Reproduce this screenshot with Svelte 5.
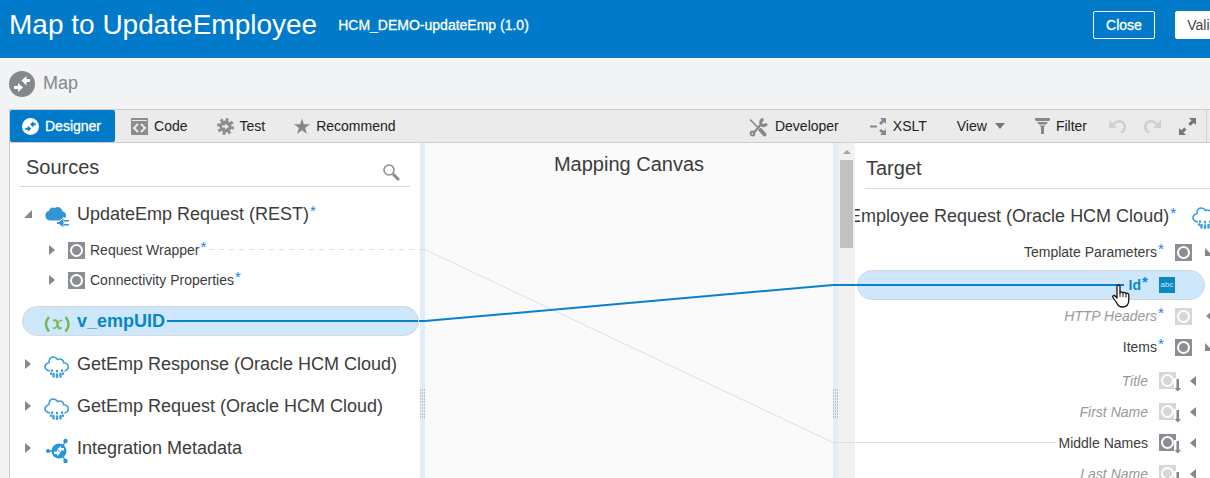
<script>
    const modes = [
        { name: 'Designer', icon: 'map', active: true },
        { name: 'Code', icon: 'code' },
        { name: 'Test', icon: 'gear' },
        { name: 'Recommend', icon: 'star' }
    ]

    const sources = [
        { name: 'UpdateEmp Request (REST)', icon: 'rest', required: true, open: true, children: [
            { name: 'Request Wrapper', required: true, mapped: true },
            { name: 'Connectivity Properties', required: true }
        ] },
        { name: 'v_empUID', icon: 'variable', selected: true },
        { name: 'GetEmp Response (Oracle HCM Cloud)', icon: 'hcm' },
        { name: 'GetEmp Request (Oracle HCM Cloud)', icon: 'hcm' },
        { name: 'Integration Metadata', icon: 'metadata' }
    ]

    const names = [
        { name: 'Title', unused: true },
        { name: 'First Name', unused: true },
        { name: 'Middle Names', mapped: true },
        { name: 'Last Name', unused: true }
    ]
</script>

{#snippet icon(name)}
    {#if name === 'map'}
        <svg class="mapicon" viewBox="0 0 26 26">
            <circle cx="13" cy="13" r="13" fill="currentColor" />
            <path class="cut" d="M12.500 9.500L17.500 5v3H21v3h-3.500v3.500zM14 16.500L9 12v3H5v3h4v3z" />
        </svg>
    {:else if name === 'code'}
        <svg width="17" height="17" viewBox="0 0 17 17">
            <path fill="#8b8d8f" d="M0 0h17v17H0z" />
            <path stroke="#ebebeb" d="M1 2.500h15" />
            <path fill="none" stroke="#ebebeb" stroke-width="2" d="M7 6L3 10l4 4M10 6l4 4-4 4" />
        </svg>
    {:else if name === 'gear'}
        <svg width="17" height="17" viewBox="0 0 17 17">
            <circle cx="8.500" cy="8.500" r="7" fill="none" stroke="#8b8d8f" stroke-width="3" stroke-dasharray="2.8 2.7" />
            <circle cx="8.500" cy="8.500" r="6" fill="#8b8d8f" />
            <path fill="#ebebeb" d="M5 7.500h3V5.500l4 3-4 3V9.500H5z" />
        </svg>
    {:else if name === 'star'}
        <svg width="16" height="17" viewBox="0 0 17 17">
            <path fill="#85888a" d="M8.500 0l2 6h6.500l-5.200 4 2 6.500-5.300-4-5.300 4 2-6.500L0 6h6.500z" />
        </svg>
    {:else if name === 'tools'}
        <svg width="19" height="19" viewBox="0 0 19 19" fill="none" stroke="#85888b">
            <path stroke-width="1.600" d="M1 1.500l8 8" />
            <path stroke-width="4" stroke-linecap="round" d="M11.500 12l4 4.500" />
            <path stroke-width="2.200" d="M4 15.500l9-10" />
            <path stroke-width="3" d="M14.500 1.600a3 3 0 1 0 3 4" />
            <circle cx="3.500" cy="15.500" r="2" stroke-width="1.800" />
        </svg>
    {:else if name === 'xslt'}
        <svg width="17" height="17" viewBox="0 0 17 17" fill="#85888b">
            <path d="M0 7.500h7v2H0zM10 0h6v6l-2-2-3 3-2-2 3-3zM10 17h6v-6l-2 2-3-2-2 2 3 2z" />
        </svg>
    {:else if name === 'filter'}
        <svg width="15" height="16" viewBox="0 0 15 16" fill="#85888b">
            <path d="M0 0h15v2l-1 1H1L0 2zM2 4h11l-2 2.500H4zM4.500 7.500h6L9 9v7H6V9z" />
        </svg>
    {:else if name === 'undo'}
        <svg width="17" height="15" viewBox="0 0 17 15">
            <path fill="#cfcfcf" d="M0 1v8h8L5.500 6.500Z" />
            <path fill="none" stroke="#cfcfcf" stroke-width="2.500" d="M4 6c3-5 10-5 11.500 0 .8 3-.5 6-3.500 7.500" />
        </svg>
    {:else if name === 'redo'}
        <svg width="17" height="15" viewBox="0 0 17 15">
            <path fill="#cfcfcf" d="M17 1v8H9l2.500-2.500Z" />
            <path fill="none" stroke="#cfcfcf" stroke-width="2.500" d="M13 6C10 1 3 1 1.500 6c-.8 3 .5 6 3.500 7.500" />
        </svg>
    {:else if name === 'expand'}
        <svg width="17" height="17" viewBox="0 0 17 17" fill="#75787b">
            <path d="M10 0h7v7l-2.300-2.300-3.200 3.200-2.200-2.200 3.200-3.200zM7 17H0v-7l2.300 2.300 3-2.800 2.200 2.200-3 2.800z" />
        </svg>
    {:else if name === 'search'}
        <svg width="17" height="17" viewBox="0 0 17 17" fill="none" stroke="#8b8b8b">
            <circle cx="6" cy="6" r="5" stroke-width="1.500" />
            <path stroke-width="3" d="M10 10l6 6" />
        </svg>
    {:else if name === 'rest'}
        <svg width="26" height="22" viewBox="0 0 26 22" fill="#3296d6">
            <path d="M6 14.500a5 5 0 0 1-1-9.800C6 1.500 8.500.700 11 2 13 0 18 1.500 18.500 5.500c3 .5 4 3 3.500 5.500L16 14.500z" />
            <path stroke="#fff" stroke-width="1" d="M12.500 15.500H15l5-4v10.500l-5-3.500h-2.500z" />
            <path d="M20 14h5v1.500h-5zM20 18h5v1.500h-5z" />
        </svg>
    {:else if name === 'hcm'}
        <svg width="26" height="22" viewBox="0 0 26 22" fill="none" stroke="#3d9edb" stroke-width="1.600">
            <path d="M6 15C2 14.500 0 11.500 1.500 9c.8-1.500 2-2.300 3.500-2.500C5 3 6.500 1.200 9 1c2 0 3.500.8 4.500 2.500C17 2 19.500 4 19.700 6.800 23 7 24.500 9 24.300 11.500 24 13.500 22.500 14.500 20.500 15" />
            <path stroke-width="2.400" stroke-linecap="round" d="M8 14.500v.2M13 15v.2M18 14.500v.2M9.500 18v2.500M13 18.500v2.500M16.500 18v2.500M7 17.500v.2M19 17.500v.2" />
        </svg>
    {:else if name === 'variable'}
        <svg width="26" height="20" viewBox="0 0 26 20" fill="none" stroke="#72b84b">
            <path stroke-width="2.600" d="M5 3c-4 4.500-4 10 0 14.500M21.500 3c4 4.500 4 10 0 14.500" />
            <path stroke-width="2" stroke-linecap="round" d="M10 6.500c2.500-1 3 0 3.500 3.500s1.200 5.500 3.500 4" />
            <path stroke-width="1.300" stroke-linecap="round" d="M18 6.500c-2.500-.8-3.500 1.500-4.500 4s-2.200 4.500-4.500 3.500" />
        </svg>
    {:else if name === 'metadata'}
        <svg width="26" height="26" viewBox="0 0 26 26" fill="#2496dc">
            <circle cx="15" cy="13" r="7.500" />
            <circle cx="4" cy="13" r="2" />
            <circle cx="21.500" cy="3" r="2.200" />
            <circle cx="21.500" cy="23" r="2.200" />
            <path stroke="#2496dc" stroke-width="1.500" d="M4 13h5M18.500 8.500l3-5.500M18.500 17.500l3 5.500" />
            <path fill="#fff" d="M13.500 11L17 8v2h3v2.500h-3v2zM16.500 15L13 18v-2h-3v-2.500h3v-2z" />
        </svg>
    {/if}
{/snippet}

{#snippet element(light, repeating)}
    <svg class="element" class:light width="17" height="17" viewBox="0 0 17 17">
        <path fill="currentColor" d="M0 0h17v17H0z" />
        <circle cx="8.500" cy="8.500" r="5.500" fill="none" stroke="#fff" stroke-width="2" />
        {#if repeating}
            <path fill="#fff" d="M15 6h6v13h-6z" />
            <path fill="#80868c" d="M17.500 7h2.500v9h2l-3.200 3.500-3.300-3.500h2z" />
        {/if}
    </svg>
{/snippet}

{#snippet toggle(label, kind)}
    <button class="toggle {kind}" aria-label="Toggle {label}">
        <svg width="8" height="12" viewBox="0 0 8 12">
            {#if kind === 'open'}
                <path d="M8 2v8H0z" />
            {:else if kind === 'open-left'}
                <path d="M0 2v8h8z" />
            {:else if kind === 'left'}
                <path d="M7 1v10L1 6z" />
            {:else}
                <path d="M1 1v10l6-5z" />
            {/if}
        </svg>
    </button>
{/snippet}

<div class="page">
    <header>
        <h1>Map to UpdateEmployee</h1>
        <span class="version">HCM_DEMO-updateEmp (1.0)</span>
        <button class="close">Close</button>
        <button class="validate">Validate</button>
    </header>

    <div class="crumb">{@render icon('map')}<span>Map</span></div>

    <main>
        <nav class="toolbar">
            {#each modes as mode}
                <button class="mode" class:active={mode.active}>{@render icon(mode.icon)}{mode.name}</button>
            {/each}
            <div class="tools">
                <button class="developer">{@render icon('tools')}Developer</button>
                <button class="xslt">{@render icon('xslt')}XSLT</button>
                <button class="view">View <span class="caret"></span></button>
                <button class="filter">{@render icon('filter')}Filter</button>
                <button aria-label="Undo" disabled>{@render icon('undo')}</button>
                <button aria-label="Redo" disabled>{@render icon('redo')}</button>
                <button aria-label="Full screen">{@render icon('expand')}</button>
                <span class="separator"></span>
            </div>
        </nav>

        <div class="workspace">
            <section class="sources">
                <div class="heading">
                    <h2>Sources</h2>
                    <button class="search" aria-label="Search sources">{@render icon('search')}</button>
                </div>
                {#each sources as source}
                    <div class="source" class:selected={source.selected}>
                        {#if !source.selected}
                            {@render toggle(source.name, source.open ? 'open' : 'right')}
                        {/if}
                        <span class="type">{@render icon(source.icon)}</span>
                        <span>{source.name}</span>
                        {#if source.required}<span class="required">*</span>{/if}
                        {#if source.selected}<span class="wire"></span>{/if}
                    </div>
                    {#each source.children ?? [] as child}
                        <div class="source child">
                            {@render toggle(child.name, 'right')}
                            {@render element(false, false)}
                            <span class="label">{child.name}</span>
                            <span class="required">*</span>
                            {#if child.mapped}<span class="wire dashed"></span>{/if}
                        </div>
                    {/each}
                {/each}
            </section>

            <div class="splitter"><span class="grip"></span></div>
            <section class="canvas">
                <h2>Mapping Canvas</h2>
                <svg class="wires" viewBox="0 0 408 335" preserveAspectRatio="none">
                    <path class="faint" d="M-5 106.500H0L408 299.500H430" />
                    <path class="strong" d="M-6 178H0L408 142H430" />
                </svg>
            </section>
            <div class="splitter"><span class="grip"></span></div>
            <div class="scrollbar">
                <span class="up"></span>
                <span class="thumb"></span>
            </div>

            <section class="target">
                <h2>Target</h2>
                <div class="field root">
                    <span>UpdateEmployee Request (Oracle HCM Cloud)</span>
                    <span class="required">*</span>
                    {@render icon('hcm')}
                </div>
                <div class="field parameters">
                    <span>Template Parameters</span>
                    <span class="required">*</span>
                    {@render element(false, false)}
                    {@render toggle('Template Parameters', 'open-left')}
                </div>
                <div class="field id">
                    <span class="wire"></span>
                    <span>Id</span>
                    <span class="required">*</span>
                    <span class="abc">abc</span>
                    <svg class="pointer" width="18" height="25" viewBox="0 0 18 25">
                        <path fill="#fff" stroke="#111" stroke-width="1.300" stroke-linejoin="round" d="M5 14V2.500C5 .500 8 .500 8 2.500V9c0-1.500 3-1.500 3 .5 0-1.500 3-1.500 3 .5 0-1.200 2.800-1 2.800 1V16c0 4-2 7-6.500 7-3 0-4.500-1.500-5.500-4L1 13.500c-.8-1.800 1.300-2.800 2.500-1.200z" />
                        <path fill="none" stroke="#111" d="M8 9v4M11 10v3M14 10.500v3" />
                    </svg>
                </div>
                <div class="field headers unused">
                    <span>HTTP Headers</span>
                    <span class="required">*</span>
                    {@render element(true, false)}
                    {@render toggle('HTTP Headers', 'left')}
                </div>
                <div class="field">
                    <span>Items</span>
                    <span class="required">*</span>
                    {@render element(false, false)}
                    {@render toggle('Items', 'open-left')}
                </div>
                <div class="names">
                    {#each names as item}
                        <div class="field" class:unused={item.unused}>
                            {#if item.mapped}<span class="wire thin"></span>{/if}
                            <span>{item.name}</span>
                            {@render element(item.unused, true)}
                            {@render toggle(item.name, 'left')}
                        </div>
                    {/each}
                </div>
            </section>
        </div>
    </main>
</div>

<style>
    :global(body) {
        margin: 0;
    }
    .page {
        display: flex;
        flex-direction: column;
        height: 100vh;
        overflow: hidden;
        background: #f2f3f5;
        color: #3c3c3c;
        font-family: "Liberation Sans", Arial, sans-serif;
        font-size: 14px;
        white-space: nowrap;
    }
    svg {
        display: block;
        flex: none;
    }
    button {
        padding: 0;
        border: 0;
        background: none;
        font: inherit;
        color: inherit;
    }
    h1, h2 {
        margin: 0;
        font-weight: normal;
    }
    h2 {
        font-size: 20px;
        line-height: 24px;
    }

    header {
        display: flex;
        flex: none;
        align-items: center;
        height: 50px;
        padding: 0 0 8px 9px;
        background: #007ac9;
        color: #fff;
        overflow: hidden;
    }
    h1 {
        font-size: 28px;
    }
    .version {
        margin-left: 21px;
        -webkit-text-stroke: 0.3px;
    }
    .close, .validate {
        flex: none;
        box-sizing: border-box;
        height: 28px;
        border: 1px solid #fff;
        border-radius: 2px;
    }
    .close {
        width: 62px;
        margin-left: auto;
        -webkit-text-stroke: 0.3px;
    }
    .validate {
        width: 74px;
        margin: 0 -39px 0 20px;
        background: #fff;
        color: #444;
    }

    .crumb {
        display: flex;
        flex: none;
        align-items: center;
        gap: 8px;
        height: 51px;
        padding-left: 9px;
        color: #85888b;
        font-size: 18px;
    }
    .mapicon {
        width: 26px;
        height: 26px;
    }
    .cut {
        fill: #fff;
    }
    .active .mapicon {
        width: 17px;
        height: 17px;
    }
    .active .cut {
        fill: #007ac9;
    }

    main {
        display: flex;
        flex: 1;
        flex-direction: column;
        min-height: 0;
        margin-left: 9px;
        border-left: 1px solid #ccc;
    }
    .toolbar {
        display: flex;
        flex: none;
        height: 32px;
        border-top: 1px solid #cdcdcd;
        border-bottom: 1px solid #cdcdcd;
        background: #ebebeb;
        color: #222;
    }
    .toolbar button {
        display: flex;
        align-items: center;
        gap: 6px;
    }
    .mode {
        padding: 0 13px 0 16px;
    }
    .toolbar .active {
        padding: 0 14px 0 12px;
        border-radius: 2px;
        background: #007ac9;
        color: #fff;
        -webkit-text-stroke: 0.3px;
    }
    .tools {
        display: flex;
        gap: 18px;
        margin-left: auto;
    }
    .tools .developer {
        gap: 7px;
    }
    .tools .developer :global(svg) {
        margin-top: 3px;
    }
    .tools .xslt {
        margin-left: 13px;
    }
    .tools .view {
        gap: 8px;
        margin-left: 12px;
    }
    .tools .filter {
        margin: 0 4px 0 12px;
    }
    .caret {
        border: 5px solid transparent;
        border-top: 6px solid #75787b;
        border-bottom: 0;
    }
    .separator {
        width: 3px;
        margin-left: -8px;
        border-left: 1px solid #d2d2d2;
    }

    .workspace {
        display: flex;
        flex: 1;
        min-height: 0;
        background: #fff;
    }
    .sources {
        flex: 0 0 410px;
    }
    .heading {
        display: flex;
        align-items: center;
        justify-content: space-between;
        height: 43px;
        margin: 0 10px 6px;
        padding: 0 10px 0 6px;
        border-bottom: 1px solid #d2d6da;
    }
    .heading h2 {
        margin-top: 4px;
    }
    .search {
        margin-top: 16px;
    }
    .source {
        display: flex;
        align-items: center;
        height: 42px;
        padding-left: 14px;
        font-size: 18px;
    }
    .source.child {
        height: 30px;
        padding-left: 38px;
        font-size: 14px;
    }
    .label {
        margin-left: 5px;
    }
    .source.selected {
        height: 28px;
        margin: 11px 1px 7px 12px;
        padding-left: 21px;
        border: 1px solid #d3d8dd;
        border-radius: 16px;
        background: #cfe7fb;
        color: #0788c4;
        font-weight: bold;
    }
    .type {
        width: 26px;
        margin-right: 7px;
        padding-top: 5px;
    }
    .toggle {
        flex: none;
        width: 20px;
        fill: #85888b;
    }
    .required {
        width: 8px;
        padding: 0 0 6px 1px;
        color: #0a84ee;
        font-size: 15px;
        font-style: normal;
        line-height: 16px;
        box-sizing: border-box;
    }
    .element {
        overflow: visible;
        color: #8b8e92;
    }
    .light {
        color: #d6d7d9;
    }
    .wire {
        flex: 1;
        height: 2px;
        margin-left: 2px;
        background: #0a80cc;
    }
    .wire.dashed {
        height: 1px;
        margin-bottom: 2px;
        background: repeating-linear-gradient(90deg, #dcdfe1 0 5px, transparent 5px 10px);
    }
    .wire.thin {
        height: 1px;
        margin: 0 4px 0 0;
        background: #d5e0ea;
    }

    .splitter {
        flex: none;
        width: 5px;
        background: #e1edf8;
    }
    .grip {
        display: block;
        height: 30px;
        margin-top: 246px;
        background:
            repeating-linear-gradient(transparent 0 2px, #e1edf8 2px 3px),
            repeating-linear-gradient(90deg, #bcc4cc 0 1px, #e1edf8 1px 2px);
    }
    .canvas {
        position: relative;
        flex: 1;
        min-width: 0;
        padding-top: 9px;
        background: #fafafa;
        text-align: center;
    }
    .wires {
        position: absolute;
        top: 0;
        left: 0;
        z-index: 1;
        width: 100%;
        height: 335px;
        overflow: visible;
        fill: none;
        pointer-events: none;
    }
    .faint {
        stroke: #d8e0e6;
        stroke-width: 1;
    }
    .strong {
        stroke: #0a80cc;
        stroke-width: 2;
    }
    .scrollbar {
        display: flex;
        flex: none;
        flex-direction: column;
        align-items: center;
        width: 17px;
        background: #f1f1f1;
    }
    .up {
        margin: 7px 0 6px;
        border: 4px solid transparent;
        border-top: 0;
        border-bottom: 4px solid #a3a3a3;
    }
    .thumb {
        width: 13px;
        height: 88px;
        background: #c1c1c1;
    }

    .target {
        flex: 0 0 355px;
        overflow: hidden;
    }
    .target h2 {
        height: 32px;
        margin: 0 0 9px 10px;
        padding: 13px 0 0 1px;
        border-bottom: 1px solid #d3dfe8;
    }
    .field {
        display: flex;
        align-items: center;
        justify-content: flex-end;
        height: 30px;
    }
    .field .element {
        margin-left: 10px;
    }
    .field .toggle {
        margin-left: 13px;
        width: 5px;
    }
    .root {
        height: 36px;
        font-size: 18px;
    }
    .root :global(svg) {
        margin: 4px -8px 0 16px;
    }
    .parameters {
        height: 36px;
    }
    .headers {
        height: 32px;
    }
    .field.id {
        position: relative;
        height: 28px;
        margin: 0 5px 0 2px;
        padding-right: 29px;
        border: 1px solid #d3d8dd;
        border-radius: 15px;
        background: #cfe7fb;
        color: #0788c4;
        font-weight: bold;
    }
    .id .wire {
        margin: 0 5px 0 -3px;
    }
    .abc {
        width: 16px;
        margin-left: 10px;
        background: #0b87c4;
        color: #cfe7fb;
        font-size: 8px;
        font-weight: normal;
        line-height: 16px;
        text-align: center;
    }
    .pointer {
        position: absolute;
        top: 13px;
        right: 74px;
    }
    .unused {
        color: #999;
        font-style: italic;
    }
    .names {
        padding-top: 3px;
    }
    .names .field {
        height: 31px;
        padding-right: 13px;
    }
    .names .toggle {
        width: 8px;
    }
    .names .element {
        margin-left: 11px;
    }
</style>
